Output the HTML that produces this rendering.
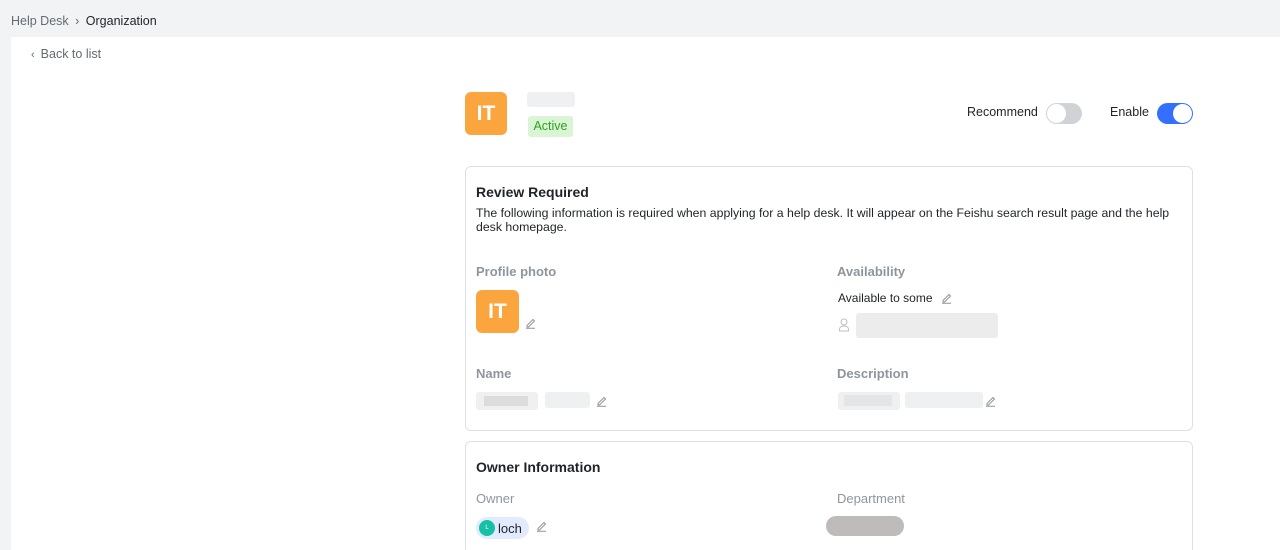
<!DOCTYPE html>
<html><head><meta charset="utf-8"><style>
*{margin:0;padding:0;box-sizing:border-box}
html,body{width:1280px;height:550px;overflow:hidden}
body{background:#f2f3f5;font-family:"Liberation Sans",sans-serif;position:relative;color:#1f2329}
.a{position:absolute}
.panel{left:11px;top:37px;width:1269px;height:513px;background:#fff}
.card{left:465px;width:728px;border:1px solid #dee0e3;border-radius:6px;background:#fff}
.lbl{font-size:13px;color:#8f959e;font-weight:bold}
.g{background:#eff0f1;border-radius:3px}
.it{background:#fba53e;border-radius:6px;color:#fff;font-weight:bold;font-size:21px;display:flex;align-items:center;justify-content:center}
.pen{width:12px;height:12px}
</style></head><body>
<div class="a" style="left:11px;top:14px;font-size:12.5px;color:#646a73">Help Desk <span style="margin:0 3px">›</span> <span style="color:#1f2329">Organization</span></div>
<div class="a panel"></div>
<div class="a" style="left:31px;top:47px;font-size:12.5px;color:#646a73"><span style="font-size:11px;margin-right:6px">‹</span>Back to list</div>

<div class="a it" style="left:465px;top:92px;width:42px;height:43px">IT</div>
<div class="a g" style="left:527px;top:92px;width:48px;height:15px"></div>
<div class="a" style="left:528px;top:116px;width:45px;height:21px;background:#d9f5d6;border-radius:3px;color:#2ea121;font-size:12.5px;line-height:21px;text-align:center">Active</div>

<div class="a" style="left:967px;top:105px;font-size:12.5px;color:#1f2329">Recommend</div>
<div class="a" style="left:1046px;top:103px;width:36px;height:21px;border-radius:11px;background:#d0d3d6"><div class="a" style="left:1px;top:1px;width:19px;height:19px;border-radius:50%;background:#fff"></div></div>
<div class="a" style="left:1110px;top:105px;font-size:12.5px">Enable</div>
<div class="a" style="left:1157px;top:103px;width:36px;height:21px;border-radius:11px;background:#3370ff"><div class="a" style="left:16px;top:1px;width:19px;height:19px;border-radius:50%;background:#fff"></div></div>

<div class="a card" style="top:166px;height:265px"></div>
<div class="a" style="left:476px;top:184px;font-size:14px;font-weight:bold">Review Required</div>
<div class="a" style="left:476px;top:206px;width:712px;font-size:12.3px;line-height:14px">The following information is required when applying for a help desk. It will appear on the Feishu search result page and the help desk homepage.</div>
<div class="a lbl" style="left:476px;top:264px">Profile photo</div>
<div class="a lbl" style="left:837px;top:264px">Availability</div>
<div class="a it" style="left:476px;top:290px;width:43px;height:43px">IT</div>
<svg class="a pen" style="left:525px;top:317px" viewBox="0 0 12 12"><path d="M2 8.5L8 2.5l1.5 1.5-6 6H2z M1 11.3h9" fill="none" stroke="#8f959e" stroke-width="1"/></svg>
<div class="a" style="left:838px;top:291px;font-size:12px">Available to some</div>
<svg class="a pen" style="left:941px;top:292px" viewBox="0 0 12 12"><path d="M2 8.5L8 2.5l1.5 1.5-6 6H2z M1 11.3h9" fill="none" stroke="#8f959e" stroke-width="1"/></svg>
<svg class="a" style="left:838px;top:318px" width="12" height="14" viewBox="0 0 12 14"><circle cx="6" cy="4" r="3" fill="none" stroke="#bbbfc4"/><path d="M1.5 13V11a4.5 3 0 0 1 9 0v2z" fill="none" stroke="#bbbfc4"/></svg>
<div class="a g" style="left:856px;top:313px;width:142px;height:25px;background:#ececec"></div>
<div class="a lbl" style="left:476px;top:366px">Name</div>
<div class="a lbl" style="left:837px;top:366px">Description</div>
<div class="a g" style="left:476px;top:392px;width:62px;height:18px"><div class="a" style="left:8px;top:4px;width:44px;height:10px;background:#dcdcdd"></div></div>
<div class="a g" style="left:545px;top:392px;width:45px;height:16px"></div>
<svg class="a pen" style="left:596px;top:395px" viewBox="0 0 12 12"><path d="M2 8.5L8 2.5l1.5 1.5-6 6H2z M1 11.3h9" fill="none" stroke="#8f959e" stroke-width="1"/></svg>
<div class="a g" style="left:838px;top:392px;width:62px;height:18px"><div class="a" style="left:6px;top:3px;width:48px;height:11px;background:#e4e5e6"></div></div>
<div class="a g" style="left:905px;top:392px;width:78px;height:16px"></div>
<svg class="a pen" style="left:985px;top:395px" viewBox="0 0 12 12"><path d="M2 8.5L8 2.5l1.5 1.5-6 6H2z M1 11.3h9" fill="none" stroke="#8f959e" stroke-width="1"/></svg>

<div class="a card" style="top:441px;height:120px"></div>
<div class="a" style="left:476px;top:459px;font-size:14px;font-weight:bold">Owner Information</div>
<div class="a lbl" style="left:476px;top:491px;font-weight:normal">Owner</div>
<div class="a lbl" style="left:837px;top:491px;font-weight:normal">Department</div>
<div class="a" style="left:476px;top:517px;width:53px;height:22px;border-radius:11px;background:#e1eaff"></div>
<div class="a" style="left:479px;top:520px;width:16px;height:16px;border-radius:50%;background:#14c0a6;color:#fff;font-size:6px;line-height:16px;text-align:center">L</div>
<div class="a" style="left:498px;top:521px;font-size:13px">loch</div>
<svg class="a pen" style="left:536px;top:520px" viewBox="0 0 12 12"><path d="M2 8.5L8 2.5l1.5 1.5-6 6H2z M1 11.3h9" fill="none" stroke="#8f959e" stroke-width="1"/></svg>
<div class="a" style="left:826px;top:516px;width:78px;height:20px;border-radius:10px;background:#bfbbbb"></div>
</body></html>
